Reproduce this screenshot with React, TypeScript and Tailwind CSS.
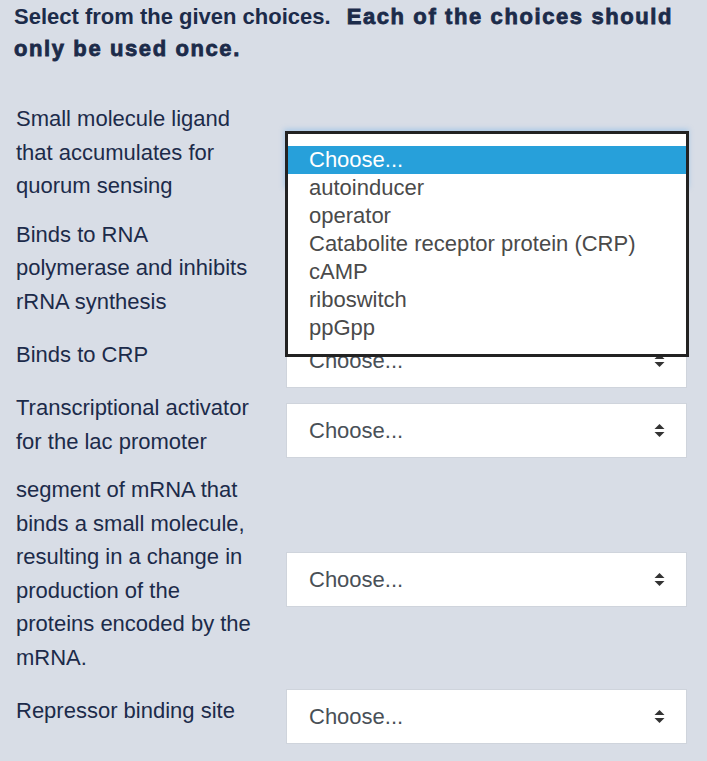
import React from "react";

const rows = [
  { label: "Small molecule ligand that accumulates for quorum sensing", open: true },
  { label: "Binds to RNA polymerase and inhibits rRNA synthesis" },
  { label: "Binds to CRP" },
  { label: "Transcriptional activator for the lac promoter" },
  {
    label:
      "segment of mRNA that binds a small molecule, resulting in a change in production of the proteins encoded by the mRNA.",
  },
  { label: "Repressor binding site" },
];

const options = [
  "Choose...",
  "autoinducer",
  "operator",
  "Catabolite receptor protein (CRP)",
  "cAMP",
  "riboswitch",
  "ppGpp",
];

function Arrows() {
  return (
    <svg width="11" height="15" viewBox="0 0 11 15" className="shrink-0">
      <polygon points="0.5,6 5.5,1 10.5,6" fill="#333" />
      <polygon points="0.5,9 10.5,9 5.5,14" fill="#333" />
    </svg>
  );
}

function SelectBox({ open }: { open?: boolean }) {
  return (
    <div
      className={
        "relative ml-[28px] flex h-[55px] w-[401px] shrink-0 items-center justify-between border border-[#cfd4dc] bg-white pl-[22px] pr-[21px] text-[#495057] " +
        (open ? "shadow-[0_0_5px_2px_rgba(90,165,235,0.35)]" : "")
      }
    >
      <span>Choose...</span>
      <Arrows />
      {open && (
        <div className="absolute left-[-2px] top-[-1px] z-10 w-[404px] border-[3px] border-[#222] bg-white py-[12px] leading-[28px]">
          {options.map((o, i) => (
            <div
              key={o}
              className={
                "h-[28px] pl-[21px] " +
                (i === 0 ? "bg-[#27a0da] text-white" : "text-[#4a4a4a]")
              }
            >
              {o}
            </div>
          ))}
        </div>
      )}
    </div>
  );
}

export default function App() {
  return (
    <div className="min-h-[761px] w-full bg-[#d8dde6] font-['Liberation_Sans',Arial,sans-serif] text-[22px] text-[#1c2b4a]">
      <div className="pl-[14px] pr-2 pt-[1px] font-bold leading-[32px]">
        Select from the given choices.
        <span className="ml-[16px] tracking-[1.6px] [-webkit-text-stroke:0.8px_#1c2b4a]">
          Each of the choices should only be used once.
        </span>
      </div>
      <div className="mt-[37px] flex flex-col gap-[3px]">
        {rows.map((r, i) => (
          <div key={i} className="flex items-center">
            <div className="w-[258px] shrink-0 pb-3 pl-4 leading-[33.5px]">{r.label}</div>
            <SelectBox open={r.open} />
          </div>
        ))}
      </div>
    </div>
  );
}
